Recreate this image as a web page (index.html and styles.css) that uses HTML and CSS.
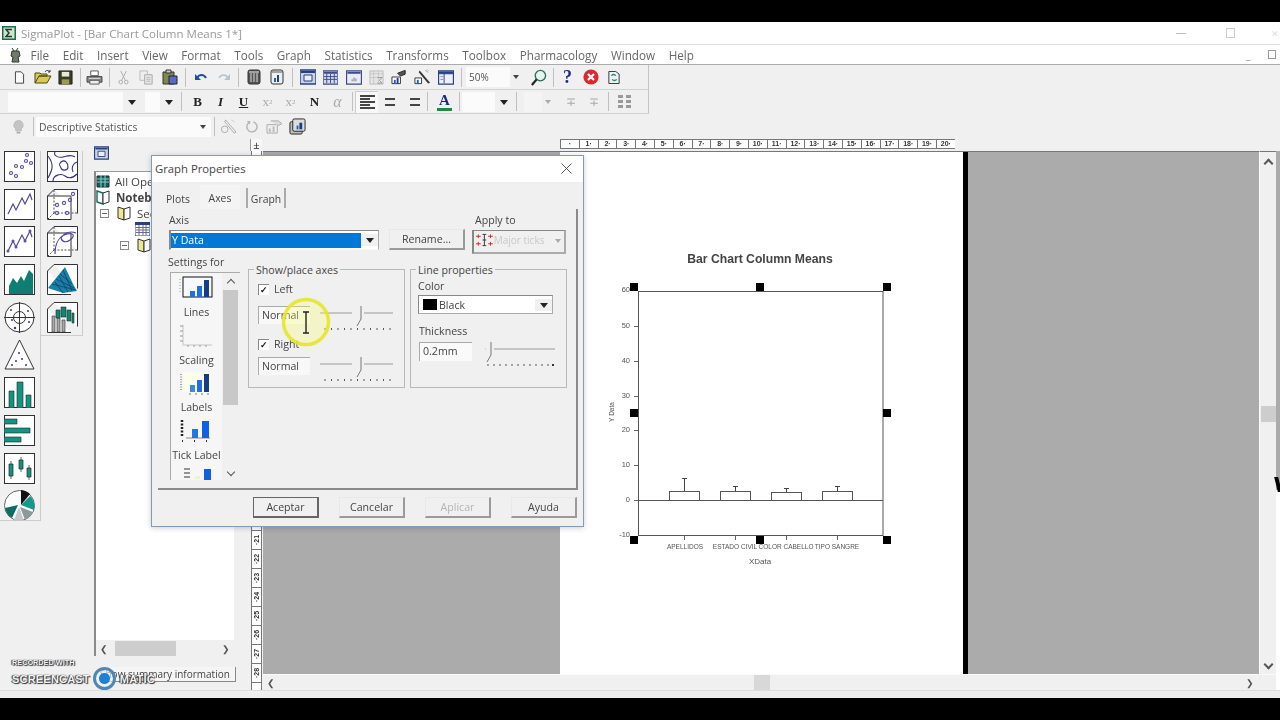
FILE: index.html
```html
<!DOCTYPE html>
<html lang="en">

<head>
    <meta charset="UTF-8">
    <meta name="viewport" content="width=device-width, initial-scale=1.0">
    <title>SigmaPlot - Graph Properties</title>
    <link rel="stylesheet" href="styles.css">
</head>

<body>
    <svg class="defs" width="0" height="0">
        <symbol id="i-new" viewBox="0 0 16 16"><path d="M3 1h7l3 3v11H3z" fill="#fff" stroke="#222"/></symbol>
        <symbol id="i-open" viewBox="0 0 18 16"><path d="M1 14V4h5l1 1h6v2H5L1 14h12l4-7H5" fill="#d9c95a" stroke="#4c4a10"/><path d="M11 3c1-2 3-2 5 0M16 1v2h-2" fill="none" stroke="#333"/></symbol>
        <symbol id="i-save" viewBox="0 0 16 16"><path d="M1 1h14v14H1z" fill="#3c3c22" stroke="#222"/><path d="M4 2h8v5H4z" fill="#e8e8d8"/><path d="M4 10h8v5H4z" fill="#9a9a50"/></symbol>
        <symbol id="i-print" viewBox="0 0 18 16"><path d="M5 1h8v5H5z" fill="#fff" stroke="#555"/><path d="M1 7h16v6H1z" fill="#888" stroke="#444"/><path d="M4 11h10v4H4z" fill="#eee" stroke="#555"/><path d="M3 9h12" stroke="#ddd"/></symbol>
        <symbol id="i-cut" viewBox="0 0 12 16"><path d="M3 1l5 10M9 1L4 11" stroke="#aaa" fill="none"/><circle cx="3" cy="13" r="2" fill="none" stroke="#aaa"/><circle cx="9" cy="13" r="2" fill="none" stroke="#aaa"/></symbol>
        <symbol id="i-copy" viewBox="0 0 16 16"><path d="M1 1h8v10H1z" fill="#eee" stroke="#bbb"/><path d="M6 5h8v10H6z" fill="#e4e4e4" stroke="#aaa"/><path d="M8 8h4M8 10h4M8 12h4" stroke="#bbb"/></symbol>
        <symbol id="i-paste" viewBox="0 0 16 16"><path d="M1 3h11v12H1z" fill="#7d8a4a" stroke="#333"/><path d="M4 1h5v3H4z" fill="#ccc" stroke="#333"/><path d="M7 7h8v8H7z" fill="#5b6bc0" stroke="#223"/></symbol>
        <symbol id="i-undo" viewBox="0 0 14 12"><path d="M3 7c2-4 7-4 9 0" fill="none" stroke="#1f4fa0" stroke-width="2"/><path d="M1 3v6h6z" fill="#1f4fa0"/></symbol>
        <symbol id="i-redo" viewBox="0 0 14 12"><path d="M2 7c2-4 7-4 9 0" fill="none" stroke="#b9c3d0" stroke-width="1.6"/><path d="M13 3v6H7z" fill="#b9c3d0"/></symbol>
        <symbol id="i-book" viewBox="0 0 16 16"><rect x="2" y="1" width="12" height="14" rx="2" fill="#555" stroke="#333"/><path d="M5 4v9M8 4v9M11 4v9" stroke="#ddd"/><path d="M3 3h10" stroke="#eee"/></symbol>
        <symbol id="i-bookchart" viewBox="0 0 16 16"><rect x="2" y="1" width="12" height="14" rx="2" fill="#eee" stroke="#333"/><path d="M5 9h2v4H5z" fill="#1f5fc0"/><path d="M8 6h2v7H8z" fill="#1f3f90"/><path d="M3 3h10" stroke="#555"/></symbol>
        <symbol id="i-win" viewBox="0 0 16 16"><path d="M0 1h16v14H0z" fill="#c7d2ea" stroke="#27417f" stroke-width="1.4"/><path d="M1 2h14v2H1z" fill="#27417f"/><path d="M4 6h8v6H4z" fill="#eef" stroke="#27417f"/></symbol>
        <symbol id="i-grid" viewBox="0 0 16 16"><path d="M0 1h16v14H0z" fill="#d4d8ee" stroke="#3b4a8a" stroke-width="1.4"/><path d="M1 2h14v2H1z" fill="#3b4a8a"/><path d="M4 4v10M8 4v10M12 4v10M1 7h14M1 10h14" stroke="#3b4a8a"/></symbol>
        <symbol id="i-chartwin" viewBox="0 0 16 16"><path d="M0 1h16v14H0z" fill="#e8ecf5" stroke="#3b4a8a" stroke-width="1.4"/><path d="M1 2h14v2H1z" fill="#3b4a8a"/><path d="M6 10v2M8 8v4M10 9v3" stroke="#777"/></symbol>
        <symbol id="i-stat" viewBox="0 0 16 16"><path d="M1 1h14v14H1z" fill="#e6e6e6" stroke="#bbb"/><path d="M1 4h14M5 1v14M10 1v14M1 8h14" stroke="#c6c6c6"/><path d="M9 8h5l-3 3 3 3H9" fill="none" stroke="#999"/></symbol>
        <symbol id="i-wiz" viewBox="0 0 18 16"><path d="M7 4l8-3v4l-5 2z" fill="#555" stroke="#222"/><path d="M1 8h9v7H1z" fill="#fff" stroke="#333"/><path d="M3 11h2v4H3z" fill="#1f5fc0"/><path d="M6 9h2v6H6z" fill="#1f3f90"/></symbol>
        <symbol id="i-tool" viewBox="0 0 18 16"><path d="M6 1l11 13-2 1L5 3z" fill="#333"/><path d="M12 1l3 2M14 0l1 1" stroke="#999"/><path d="M1 9h7v6H1z" fill="#fff" stroke="#333"/><path d="M3 11h2v4H3z" fill="#1f5fc0"/></symbol>
        <symbol id="i-split" viewBox="0 0 16 16"><path d="M0 1h16v14H0z" fill="#eef" stroke="#27417f" stroke-width="1.4"/><path d="M1 2h14v2H1zM6 4v10" fill="#27417f" stroke="#27417f"/><path d="M2 7h3M2 10h3" stroke="#888"/></symbol>
        <symbol id="i-search" viewBox="0 0 18 18"><circle cx="11" cy="7" r="5.5" fill="#e6f4ee" stroke="#2c6b60" stroke-width="1.4"/><path d="M7 11l-5 6" stroke="#222" stroke-width="2.4"/></symbol>
        <symbol id="i-stop" viewBox="0 0 16 16"><circle cx="8" cy="8" r="7.6" fill="#dc2730"/><path d="M5 5l6 6M11 5l-6 6" stroke="#fff" stroke-width="2.2"/></symbol>
        <symbol id="i-recalc" viewBox="0 0 14 16"><path d="M1 1h8l4 3v11H1z" fill="#eef" stroke="#222"/><path d="M4 6c1-2 4-2 5 0M10 10c-1 2-4 2-5 0" fill="none" stroke="#1a9a3a" stroke-width="1.6"/></symbol>
        <symbol id="i-bulb" viewBox="0 0 14 16"><path d="M7 1a5 5 0 0 1 3 9v2H4v-2A5 5 0 0 1 7 1z" fill="#c4c4c4" stroke="#bbb"/><path d="M5 13h4v2H5z" fill="#aaa"/></symbol>
        <symbol id="i-rotate" viewBox="0 0 14 14"><path d="M9 2a5.5 5.5 0 1 1-5 1" fill="none" stroke="#b5b5b5" stroke-width="1.6"/><path d="M2 1l4 0-1 4z" fill="#b5b5b5"/></symbol>
        <symbol id="i-toolgrey" viewBox="0 0 18 16"><path d="M6 1l11 13-2 1L5 3z" fill="none" stroke="#aaa"/><path d="M12 1l3 2" stroke="#ccc"/><circle cx="5" cy="11" r="3.5" fill="none" stroke="#aaa"/></symbol>
        <symbol id="i-pagegrey" viewBox="0 0 18 16"><path d="M1 6h11v9H1z" fill="#eee" stroke="#aaa"/><path d="M5 2h8l4 3-4 2" fill="#ddd" stroke="#aaa"/><path d="M3 10h2v4H3zM7 8h2v6H7z" fill="#bbb"/></symbol>
        <symbol id="i-bookdark" viewBox="0 0 18 18"><rect x="1" y="4" width="13" height="13" rx="1.5" fill="#bbb" stroke="#222"/><rect x="4" y="1" width="13" height="13" rx="1.5" fill="#ddd" stroke="#222"/><path d="M8 8h2v4H8z" fill="#1f5fc0"/><path d="M11 5h3v7h-3z" fill="#14407f"/></symbol>
        <symbol id="i-tree-grid" viewBox="0 0 15 14"><path d="M0 0h15v14H0z" fill="#fff" stroke="#27417f"/><path d="M0 0h15v3H0z" fill="#27417f"/><path d="M1 5.500h13M1 8h13M1 10.500h13M4 3v10M8 3v10M11 3v10" stroke="#6b6b8a"/></symbol>
        <symbol id="i-tree-book" viewBox="0 0 15 16"><path d="M1 2l6 2v11l-6-2z" fill="#eee890" stroke="#333"/><path d="M13 2L7 4v11l6-2z" fill="#fff" stroke="#333"/></symbol>
        <symbol id="i-tree-all" viewBox="0 0 14 14"><path d="M1 2h12v11H1z" fill="#10605a" stroke="#222"/><path d="M5 1v12M9 1v12M1 5h12M1 8h12" stroke="#8cc"/></symbol>
        <symbol id="i-tree-nb" viewBox="0 0 15 16"><path d="M1 2l6 2v11l-6-2z" fill="#fff" stroke="#0d6a60" stroke-width="1.4"/><path d="M13 2L7 4v11l6-2z" fill="#fff" stroke="#333"/></symbol>
        <symbol id="slider" viewBox="0 0 73 30"><path d="M0 7h32M44 7h29" stroke="#9a9a9a"/><path d="M41 0v13l-4 7" fill="none" stroke="#777"/><path d="M5 22v2M11.500 22v2M18 22v2M24.500 22v2M31 22v2M37.500 22v2M44 22v2M50.500 22v2M57 22v2M63.500 22v2M70 22v2" stroke="#555"/></symbol>
        <symbol id="slider-low" viewBox="0 0 71 30"><path d="M10 7h61" stroke="#9a9a9a"/><path d="M7 0v13l-4 7" fill="none" stroke="#777"/><path d="M1 7h1" stroke="#bbb"/><path d="M4 22v2M10 22v2M16 22v2M22 22v2M28 22v2M34 22v2M40 22v2M46 22v2M52 22v2M58 22v2M64 22v2" stroke="#555"/><path d="M68 22h2v2h-2z" fill="#333"/></symbol>
    </svg>

    <div class="app">
        <div class="titlebar">
            <svg class="app-icon" viewBox="0 0 14 14"><rect width="14" height="14" fill="#1e6b4c"/><rect x="1.500" y="1.500" width="11" height="11" fill="#cfe4c8"/><path d="M10 3.500H4l3 3.500-3 3.500h6" fill="none" stroke="#173d2e" stroke-width="1.400"/></svg>
            <span class="app-title">SigmaPlot - [Bar Chart Column Means 1*]</span>
            <span class="win-btn win-min"></span>
            <span class="win-btn win-max"></span>
            <span class="win-close">&#10005;</span>
        </div>

        <div class="menubar">
            <svg class="menu-icon" viewBox="0 0 14 16"><path d="M3 1l2 3M9 1L7 4M3 4h7l1 5-2 1 1 5H3l1-5-2-1z" fill="#6f7c6c" stroke="#2d3a2a"/></svg>
            <span>File</span>
            <span>Edit</span>
            <span>Insert</span>
            <span>View</span>
            <span>Format</span>
            <span>Tools</span>
            <span>Graph</span>
            <span>Statistics</span>
            <span>Transforms</span>
            <span>Toolbox</span>
            <span>Pharmacology</span>
            <span>Window</span>
            <span>Help</span>
            <span class="menu-right">_</span>
            <span class="menu-restore"></span>
        </div>

        <div class="toolbar tb-one">
            <span class="btn"><svg width="13" height="15"><use href="#i-new"/></svg></span>
            <span class="btn"><svg width="18" height="16"><use href="#i-open"/></svg></span>
            <span class="btn"><svg width="15" height="15"><use href="#i-save"/></svg></span>
            <span class="sep sep-n"></span>
            <span class="btn"><svg width="17" height="15"><use href="#i-print"/></svg></span>
            <span class="sep sep-n"></span>
            <span class="btn"><svg width="11" height="15"><use href="#i-cut"/></svg></span>
            <span class="btn"><svg width="15" height="15"><use href="#i-copy"/></svg></span>
            <span class="btn"><svg width="16" height="16"><use href="#i-paste"/></svg></span>
            <span class="sep sep-w"></span>
            <span class="btn"><svg width="14" height="12"><use href="#i-undo"/></svg></span>
            <span class="btn"><svg width="14" height="12"><use href="#i-redo"/></svg></span>
            <span class="sep"></span>
            <span class="btn"><svg width="16" height="16"><use href="#i-book"/></svg></span>
            <span class="btn"><svg width="16" height="16"><use href="#i-bookchart"/></svg></span>
            <span class="sep sep-w"></span>
            <span class="btn"><svg width="16" height="16"><use href="#i-win"/></svg></span>
            <span class="btn"><svg width="15" height="15"><use href="#i-grid"/></svg></span>
            <span class="btn"><svg width="16" height="15"><use href="#i-chartwin"/></svg></span>
            <span class="btn"><svg width="15" height="15"><use href="#i-stat"/></svg></span>
            <span class="btn"><svg width="17" height="16"><use href="#i-wiz"/></svg></span>
            <span class="btn"><svg width="17" height="16"><use href="#i-tool"/></svg></span>
            <span class="btn"><svg width="16" height="15"><use href="#i-split"/></svg></span>
            <span class="sep sep-x"></span>
            <span class="combo-white zoom-combo">50%</span>
            <span class="drop drop-small"></span>
            <span class="btn btn-gap"><svg width="17" height="17"><use href="#i-search"/></svg></span>
            <span class="sep sep-n"></span>
            <span class="btn help-q">?</span>
            <span class="btn"><svg width="16" height="16"><use href="#i-stop"/></svg></span>
            <span class="btn"><svg width="12" height="15"><use href="#i-recalc"/></svg></span>
        </div>

        <div class="toolbar tb-two">
            <span class="combo-white font-combo"></span>
            <span class="drop drop-grey"></span>
            <span class="combo-white size-combo"></span>
            <span class="drop"></span>
            <span class="sep sep-x"></span>
            <span class="btn fmt fmt-b">B</span>
            <span class="btn fmt fmt-i">I</span>
            <span class="btn fmt fmt-u">U</span>
            <span class="btn fmt fmt-off fmt-sup">x<sup>2</sup></span>
            <span class="btn fmt fmt-off">x<sub>2</sub></span>
            <span class="btn fmt fmt-b fmt-n">N</span>
            <span class="btn fmt fmt-alpha">&#945;</span>
            <span class="sep sep-n"></span>
            <span class="btn btn-pressed"><span class="align align-left"><i></i><i></i><i></i><i></i><i></i></span></span>
            <span class="btn"><span class="align align-center"><i></i><i></i><i></i><i></i><i></i></span></span>
            <span class="btn"><span class="align align-right"><i></i><i></i><i></i><i></i><i></i></span></span>
            <span class="sep sep-n"></span>
            <span class="btn fmt-color">A</span>
            <span class="sep sep-n"></span>
            <span class="combo-white color-combo"></span>
            <span class="drop drop-grey"></span>
            <span class="sep sep-x"></span>
            <span class="combo-off"></span>
            <span class="drop drop-small drop-off"></span>
            <span class="btn fmt-off fmt-dist fmt-dist1">&#8723;</span>
            <span class="btn fmt-off fmt-dist">&#8723;</span>
            <span class="sep sep-n"></span>
            <span class="btn dots"><i></i><i></i><i></i><i></i><i></i><i></i></span>
        </div>

        <div class="toolbar tb-three">
            <span class="btn bulb"><svg width="13" height="16"><use href="#i-bulb"/></svg></span>
            <span class="sep sep-n"></span>
            <span class="combo-white stats-combo">Descriptive Statistics<span class="drop drop-small"></span></span>
            <span class="sep sep-n"></span>
            <span class="btn"><svg width="17" height="15"><use href="#i-toolgrey"/></svg></span>
            <span class="btn"><svg width="13" height="13"><use href="#i-rotate"/></svg></span>
            <span class="btn"><svg width="17" height="15"><use href="#i-pagegrey"/></svg></span>
            <span class="btn"><svg width="17" height="17"><use href="#i-bookdark"/></svg></span>
        </div>

        <div class="ruler-row">
            <span class="ruler-corner">&#177;</span>
            <div class="hruler">
                <span>&#183;</span><span>1&#183;</span><span>2&#183;</span><span>3&#183;</span><span>4&#183;</span><span>5&#183;</span><span>6&#183;</span><span>7&#183;</span><span>8&#183;</span><span>9&#183;</span><span>10&#183;</span><span>11&#183;</span><span>12&#183;</span><span>13&#183;</span><span>14&#183;</span><span>15&#183;</span><span>16&#183;</span><span>17&#183;</span><span>18&#183;</span><span>19&#183;</span><span>20&#183;</span>
            </div>
        </div>

        <div class="main">
            <div class="palette">
                <div class="pal-col pal-col-one">
                    <svg class="pal" viewBox="0 0 31 31"><rect x=".5" y=".5" width="30" height="30" fill="#fff" stroke="#333"/><g fill="none" stroke="#5b50a8" stroke-width="1.200"><circle cx="7" cy="22" r="1.500"/><circle cx="12" cy="25" r="1.500"/><circle cx="12" cy="15" r="1.500"/><circle cx="18" cy="16" r="1.500"/><circle cx="22" cy="10" r="1.500"/><circle cx="27" cy="12" r="1.500"/><circle cx="23" cy="4" r="1.500"/></g></svg>
                    <svg class="pal" viewBox="0 0 31 31"><rect x=".5" y=".5" width="30" height="30" fill="#fff" stroke="#333"/><path d="M4 25l5-10 3 6 6-12 3 6 5-10 2 6" fill="none" stroke="#4f44a0" stroke-width="1.200"/></svg>
                    <svg class="pal" viewBox="0 0 31 31"><rect x=".5" y=".5" width="30" height="30" fill="#fff" stroke="#333"/><path d="M4 25l5-10 3 6 6-12 3 6 5-10 2 6" fill="none" stroke="#4f44a0" stroke-width="1.200"/><g fill="#5b50a8"><circle cx="4" cy="25" r="1.500"/><circle cx="9" cy="15" r="1.500"/><circle cx="12" cy="21" r="1.500"/><circle cx="21" cy="15" r="1.500"/><circle cx="26" cy="5" r="1.500"/></g></svg>
                    <svg class="pal" viewBox="0 0 31 31"><rect x=".5" y=".5" width="30" height="30" fill="#fff" stroke="#333"/><path d="M5 30V22l4-8 4 5 4-7 3 5 5-11 4 4v20z" fill="#0f7d72"/></svg>
                    <svg class="pal" viewBox="0 0 31 31"><circle cx="15.500" cy="15.500" r="14.500" fill="#fff" stroke="#333"/><circle cx="15.500" cy="15.500" r="6" fill="none" stroke="#333"/><path d="M15.500 0v31M0 15.500h31" stroke="#333"/><g fill="#3b3590"><circle cx="7" cy="8" r="1"/><circle cx="24" cy="9" r="1"/><circle cx="8" cy="18" r="1"/><circle cx="25" cy="20" r="1"/><circle cx="11" cy="26" r="1.200"/></g></svg>
                    <svg class="pal pal-tri" viewBox="0 0 31 31"><path d="M15.500 1L30 30H1z" fill="#fff" stroke="#333"/><g fill="#3b3590"><circle cx="15" cy="14" r="1"/><circle cx="18" cy="20" r="1"/><circle cx="12" cy="22" r="1"/><circle cx="22" cy="26" r="1"/><circle cx="8" cy="26" r="1"/></g></svg>
                    <svg class="pal" viewBox="0 0 31 31"><rect x=".5" y=".5" width="30" height="30" fill="#fff" stroke="#333"/><path d="M5 14h5v17H5zM13 5h6v26h-6zM22 18h5v13h-5z" fill="#129482" stroke="#222" stroke-width=".6"/></svg>
                    <svg class="pal" viewBox="0 0 31 31"><rect x=".5" y=".5" width="30" height="30" fill="#fff" stroke="#333"/><path d="M0 4h13v5H0zM0 13h26v5H0zM0 22h17v5H0z" fill="#129482" stroke="#222" stroke-width=".6"/></svg>
                    <svg class="pal" viewBox="0 0 31 31"><rect x=".5" y=".5" width="30" height="30" fill="#fff" stroke="#333"/><g fill="#129482" stroke="#222" stroke-width=".7"><path d="M5 11h4v12H5zM15 7h4v9h-4zM23 15h4v9h-4z"/><path d="M7 8v3M7 23v3M17 4v3M17 16v3M25 12v3M25 24v3" fill="none"/></g></svg>
                    <svg class="pal" viewBox="0 0 31 31"><circle cx="15.500" cy="15.500" r="15" fill="#fff" stroke="#666"/><path d="M17 15V0a15 15 0 0 1 9 4z" fill="#111"/><path d="M17 15l9-9a15 15 0 0 1 4 14z" fill="#139a8a"/><path d="M16 17l13 5a15 15 0 0 1-8 8z" fill="#8a9a9a"/><path d="M15 17l5 14a15 15 0 0 1-10-1z" fill="#c8c8c8"/><path d="M14 15L1 18a15 15 0 0 0 7 10z" fill="#0d6d64"/></svg>
                </div>
                <div class="pal-col pal-col-two">
                    <svg class="pal" viewBox="0 0 31 31"><rect x=".5" y=".5" width="30" height="30" fill="#fff" stroke="#333"/><path d="M1 5c6 8 5 13 0 22M8 1c-2 4 4 6 8 5s8-3 12 0M14 11c4-3 7 1 7 5s-6 4-7 1-3-3 0-6zM6 30c0-6 8-8 12-5s8 2 12-2M30 11c-4 1-6 6-4 10" fill="none" stroke="#30308a" stroke-width="1.100"/></svg>
                    <svg class="pal" viewBox="0 0 31 31"><path d="M7 .5h23.500v24M.5 7v23.500H24M7 .5L.5 7M.5 7h23.500v23.500" fill="#fff" stroke="#333"/><path d="M7 1v23M7 24h23M7 24l-6 6" stroke="#555" stroke-dasharray="2 1.500"/><g fill="none" stroke="#5b50a8" stroke-width="1.100"><circle cx="10" cy="16" r="1.600"/><circle cx="17" cy="14" r="1.600"/><circle cx="23" cy="11" r="1.600"/><circle cx="26" cy="5" r="1.600"/><circle cx="10" cy="24" r="1.600"/><circle cx="20" cy="24" r="1.600"/></g></svg>
                    <svg class="pal" viewBox="0 0 31 31"><path d="M7 .5h23.500v24M.5 7v23.500H24M7 .5L.5 7M.5 7h23.500v23.500" fill="#fff" stroke="#333"/><path d="M7 1v23M7 24h23M7 24l-6 6" stroke="#555" stroke-dasharray="2 1.500"/><path d="M8 28c0-10 4-18 12-20 6-1 9 1 3 6-4 3-8 2-9-2M14 12c4-6 10-7 15-5" fill="none" stroke="#4f44a0" stroke-width="1.200"/></svg>
                    <svg class="pal" viewBox="0 0 31 31"><path d="M7 .5h23.500v24M.5 7v23.500H24M7 .5L.5 7" fill="#fff" stroke="#333"/><path d="M1 24L18 3l9 19 3 5-14 2z" fill="#1780a8"/><path d="M5 20l24 6M9 15l18 9M13 10l12 10M8 18l8 11M12 12l9 16M16 6l9 21" stroke="#0b3b58" stroke-width=".7"/></svg>
                    <svg class="pal" viewBox="0 0 31 31"><path d="M7 .5h23.500v24M.5 7v23.500H24M7 .5L.5 7" fill="#fff" stroke="#333"/><path d="M5 14h3v16H5zM10 16h3v14h-3zM15 18h3v12h-3z" fill="#a8a8a8" stroke="#333" stroke-width=".6"/><path d="M9 8h4v8H9zM14 5h5v10h-5zM20 8h4v11h-4zM25 11h2v10h-2z" fill="#15856f" stroke="#1c2c2a" stroke-width=".6"/></svg>
                </div>
            </div>

            <div class="side">
                <div class="side-top">
                    <svg class="side-icon" width="15" height="14"><use href="#i-win"/></svg>
                </div>
                <div class="tree">
                    <div class="tree-rows">
                        <div class="tree-row"><svg width="14" height="14"><use href="#i-tree-all"/></svg><span>All Ope</span></div>
                        <div class="tree-row"><svg width="15" height="16"><use href="#i-tree-nb"/></svg><b>Noteb</b></div>
                        <div class="tree-row tree-sec"><i class="tree-box"></i><svg width="15" height="16"><use href="#i-tree-book"/></svg><span>Sec</span></div>
                        <div class="tree-row tree-doc"><svg width="15" height="14"><use href="#i-tree-grid"/></svg></div>
                        <div class="tree-row tree-sec2"><i class="tree-box"></i><svg width="15" height="16"><use href="#i-tree-book"/></svg></div>
                    </div>
                    <div class="tree-scroll">
                        <span class="arrow-text">&#10094;</span>
                        <span class="tree-thumb"></span>
                        <span class="arrow-text">&#10095;</span>
                    </div>
                </div>
                <div class="summary-btn">Show summary information</div>
            </div>

            <div class="vruler">
                <span>&#183;1</span><span>&#183;2</span><span>&#183;3</span><span>&#183;4</span><span>&#183;5</span><span>&#183;6</span><span>&#183;7</span><span>&#183;8</span><span>&#183;9</span><span>&#183;10</span><span>&#183;11</span><span>&#183;12</span><span>&#183;13</span><span>&#183;14</span><span>&#183;15</span><span>&#183;16</span><span>&#183;17</span><span>&#183;18</span><span>&#183;19</span><span>&#183;20</span><span>&#183;21</span><span>&#183;22</span><span>&#183;23</span><span>&#183;24</span><span>&#183;25</span><span>&#183;26</span><span>&#183;27</span><span>&#183;28</span><span></span>
            </div>

            <div class="doc">
                <div class="doc-main">
                    <div class="doc-row">
                        <div class="canvas">
                            <div class="page">
                                <svg class="chart" viewBox="560 152 403 522">
                                    <text x="760" y="263" class="c-title" text-anchor="middle">Bar Chart Column Means</text>
                                    <rect x="638.500" y="291.500" width="244.500" height="244" fill="none" stroke="#555"/>
                                    <path d="M638 500.500h245" stroke="#555"/>
                                    <path d="M634 326.500h4M634 361.500h4M634 396.500h4M634 430.500h4M634 465.500h4M634 500.500h4" stroke="#666"/>
                                    <g class="c-tick" text-anchor="end">
                                        <text x="630" y="292">60</text>
                                        <text x="630" y="328">50</text>
                                        <text x="630" y="363">40</text>
                                        <text x="630" y="398">30</text>
                                        <text x="630" y="432">20</text>
                                        <text x="630" y="467">10</text>
                                        <text x="630" y="502">0</text>
                                        <text x="630" y="537">-10</text>
                                    </g>
                                    <g fill="#fff" stroke="#555">
                                        <rect x="669.500" y="491.500" width="30" height="9"/>
                                        <rect x="720.500" y="491.500" width="30" height="9"/>
                                        <rect x="771.500" y="492.500" width="30" height="8"/>
                                        <rect x="822.500" y="491.500" width="30" height="9"/>
                                    </g>
                                    <path d="M684.500 491v-13M682 478.500h5M735.500 491v-4.500M733 486.500h5M786.500 492v-3.500M784 488.500h5M837.500 491v-4.500M835 486.500h5" stroke="#444" fill="none"/>
                                    <path d="M684.500 535v5M735.500 535v5M786.500 535v5M837.500 535v5" stroke="#666"/>
                                    <g class="c-label" text-anchor="middle">
                                        <text x="685" y="549">APELLIDOS</text>
                                        <text x="735" y="549">ESTADO CIVIL</text>
                                        <text x="786" y="549">COLOR CABELLO</text>
                                        <text x="837" y="549">TIPO SANGRE</text>
                                    </g>
                                    <text x="760" y="564" class="c-axis" text-anchor="middle">XData</text>
                                    <text class="c-axis c-axis-y" transform="translate(614 412) rotate(-90)" text-anchor="middle">Y Data</text>
                                    <g fill="#000">
                                        <rect x="630" y="283" width="8" height="8"/><rect x="756" y="283" width="8" height="8"/><rect x="883" y="283" width="8" height="8"/>
                                        <rect x="630" y="409" width="8" height="8"/><rect x="883" y="409" width="8" height="8"/>
                                        <rect x="630" y="536" width="8" height="8"/><rect x="756" y="536" width="8" height="8"/><rect x="883" y="536" width="8" height="8"/>
                                    </g>
                                </svg>
                            </div>
                            <div class="page-shadow"></div>
                        </div>
                        <div class="vscroll">
                            <span class="arrow-up"></span>
                            <span class="vthumb"></span>
                            <span class="arrow-down"></span>
                        </div>
                    </div>
                    <div class="hscroll">
                        <span class="arrow-text">&#10094;</span>
                        <span class="hthumb"></span>
                        <span class="arrow-text">&#10095;</span>
                    </div>
                </div>
                <div class="edge"></div>
            </div>
        </div>
        <div class="statusbar"></div>
    </div>

    <!-- dialog -->
    <div class="dialog">
        <div class="dlg-title">
            <span>Graph Properties</span>
            <svg class="dlg-close" width="11" height="11" viewBox="0 0 11 11"><path d="M.5.5l10 10M10.500.5l-10 10" stroke="#555"/></svg>
        </div>
        <div class="tabs">
            <span class="tab">Plots</span>
            <span class="tab tab-active">Axes</span>
            <span class="tab tab-frame">Graph</span>
        </div>
        <div class="panel">
            <div class="panel-top">
                <div class="axis-col">
                    <div class="lbl">Axis</div>
                    <div class="axis-combo"><span class="axis-sel">Y Data</span><span class="drop drop-grey"></span></div>
                </div>
                <div class="push-btn rename">Rename...</div>
                <div class="apply-col">
                    <div class="lbl">Apply to</div>
                    <div class="apply-combo">
                        <svg width="20" height="14" viewBox="0 0 20 14"><path d="M1 3h5M3.500 1v4M1 11h5M3.500 9v4M14 3h5M16.500 1v4M14 11h5M16.500 9v4" stroke="#d8222a"/><path d="M10 1v12M8 1h4M8 13h4M8 7h4" stroke="#333"/></svg>
                        <span>Major ticks</span>
                        <span class="drop drop-small drop-off"></span>
                    </div>
                </div>
            </div>
            <div class="panel-body">
                <div class="settings-col">
                    <div class="lbl">Settings for</div>
                    <div class="list">
                        <div class="list-items">
                            <div class="list-item">
                                <svg width="34" height="24" viewBox="0 0 34 24"><rect x="4" y="1" width="29" height="20" fill="#f8f8ff" stroke="#111"/><path d="M11 15h5v6h-5zM18 10h5v11h-5z" fill="#1f6fe0"/><path d="M25 4h5v17h-5z" fill="#143c8a"/><path d="M1 3v15" stroke="#999" stroke-dasharray="1 2"/></svg>
                                <span>Lines</span>
                            </div>
                            <div class="list-item">
                                <svg width="34" height="24" viewBox="0 0 34 24"><path d="M4 1v20h29" fill="none" stroke="#ddd" stroke-width="2"/><path d="M1 2h3M1 7h3M1 12h3M1 17h3M8 22h2M14 22h2M20 22h2M26 22h2" stroke="#999"/></svg>
                                <span>Scaling</span>
                            </div>
                            <div class="list-item">
                                <svg width="34" height="24" viewBox="0 0 34 24"><path d="M4 1h28v20H4z" fill="#fdfdee"/><path d="M11 14h5v7h-5z" fill="#3a88e0"/><path d="M18 9h5v12h-5z" fill="#1f6fe0"/><path d="M25 3h5v18h-5z" fill="#143c8a"/><path d="M2 3v16" stroke="#555" stroke-dasharray="1 1.500"/><path d="M10 23h20" stroke="#777" stroke-dasharray="2 4"/></svg>
                                <span>Labels</span>
                            </div>
                            <div class="list-item">
                                <svg width="34" height="24" viewBox="0 0 34 24"><path d="M3 1v17" stroke="#222" stroke-width="2.500" stroke-dasharray="2 1.500"/><path d="M7 19h24" stroke="#888"/><path d="M13 10h6v9h-6z" fill="#1f78e0"/><path d="M23 2h7v17h-7z" fill="#1060e0"/><path d="M3 22h1M15 22h1M27 22h1" stroke="#333" stroke-width="2"/></svg>
                                <span>Tick Label</span>
                            </div>
                            <div class="list-item">
                                <svg width="34" height="24" viewBox="0 0 34 24"><path d="M5 2h6M5 6h6M5 10h6" stroke="#333"/><path d="M16 9h5v3h-5z" fill="#f3f2c6"/><path d="M25 2h7v12h-7z" fill="#1060e0"/></svg>
                            </div>
                        </div>
                        <div class="list-scroll">
                            <span class="arrow-up arrow-light"></span>
                            <span class="list-thumb"></span>
                            <span class="arrow-down arrow-light"></span>
                        </div>
                    </div>
                </div>

                <div class="group group-axes">
                    <span class="legend">Show/place axes</span>
                    <div class="check-row"><span class="check">&#10003;</span><span>Left</span></div>
                    <div class="field-row">
                        <span class="field">Normal</span>
                        <svg class="slider" width="73" height="30"><use href="#slider"/></svg>
                    </div>
                    <div class="check-row check-row2"><span class="check">&#10003;</span><span>Right</span></div>
                    <div class="field-row field-row2">
                        <span class="field">Normal</span>
                        <svg class="slider" width="73" height="30"><use href="#slider"/></svg>
                    </div>
                </div>

                <div class="group group-line">
                    <span class="legend">Line properties</span>
                    <div class="lbl color-lbl">Color</div>
                    <div class="color-select"><i class="swatch"></i><span>Black</span><span class="drop drop-grey"></span></div>
                    <div class="lbl thick-lbl">Thickness</div>
                    <div class="field-row thick-row">
                        <span class="field field-thick">0.2mm</span>
                        <svg class="slider slider-thick" width="71" height="30"><use href="#slider-low"/></svg>
                    </div>
                </div>
            </div>
        </div>
        <div class="dlg-footer">
            <div class="push-btn btn-default">Aceptar</div>
            <div class="push-btn">Cancelar</div>
            <div class="push-btn btn-disabled">Aplicar</div>
            <div class="push-btn">Ayuda</div>
        </div>
    </div>

    <!-- screencast highlight and watermark -->
    <svg class="highlight" width="56" height="56" viewBox="0 0 56 56">
        <circle cx="28" cy="28" r="22.500" fill="#ffff70" fill-opacity=".3" stroke="#e6e62a" stroke-width="3.500" stroke-opacity=".9"/>
        <path d="M25 18h6M25 39h6M28 18v21" stroke="#222" stroke-width="1.400"/>
    </svg>
    <div class="watermark">
        <div class="wm-small">RECORDED WITH</div>
        <div class="wm-big"><span>SCREENCAST</span><i class="wm-dot"></i><span>MATIC</span></div>
    </div>
</body>
</html>
```

FILE: styles.css
```css
* {
    box-sizing: border-box;
}

body {
    margin: 0;
    padding: 0;
    width: 1280px;
    height: 720px;
    overflow: hidden;
    background-color: black;
    font-family: 'Open Sans', 'Liberation Sans', sans-serif;
    position: relative;
}

.defs {
    position: absolute;
}

.app {
    margin-top: 22px;
    height: 676px;
    display: flex;
    flex-direction: column;
    background-color: #f0f0f0;
    color: #444;
    filter: blur(0.3px);
}

/* title + menu */
.titlebar {
    height: 23px;
    background-color: white;
    border-bottom: 1px solid #ddd;
    display: flex;
    align-items: center;
    padding-left: 2px;
    flex: none;
}

.app-icon {
    width: 14px;
    height: 14px;
}

.app-title {
    margin-left: 5px;
    font-size: 11.5px;
    color: #999;
}

.win-btn {
    display: block;
    flex: none;
}

.win-min {
    margin-left: auto;
    margin-right: 40px;
    width: 10px;
    height: 1px;
    background-color: #bbb;
}

.win-max {
    margin-right: 36px;
    width: 9px;
    height: 10px;
    border: 1px solid #ccc;
}

.win-close {
    font-size: 9px;
    color: #ddd;
    width: 9px;
    flex: none;
    overflow: hidden;
}

.menubar {
    height: 20px;
    flex: none;
    background-color: white;
    border-bottom: 1px solid #aaa;
    display: flex;
    align-items: center;
    gap: 13.6px;
    font-size: 11.7px;
    color: #666;
    padding-left: 9px;
}

.menu-icon {
    width: 14px;
    height: 16px;
    margin-right: -6px;
}

.menu-right {
    margin-left: auto;
    font-size: 10px;
    color: #888;
    margin-right: 4px;
}

.menu-restore {
    width: 8px;
    height: 9px;
    border: 1px solid #999;
    margin-right: 4px;
}

/* toolbars */
.toolbar {
    flex: none;
    display: flex;
    align-items: center;
    width: 649px;
    border-right: 1px solid #c4c4c4;
    border-bottom: 1px solid #d2d2d2;
}

.tb-one {
    height: 25px;
    padding-left: 8px;
}

.tb-two {
    height: 24px;
    padding-left: 8px;
}

.tb-three {
    height: 25px;
    padding-left: 7px;
    border: none;
}

.btn {
    width: 23px;
    height: 22px;
    flex: none;
    display: flex;
    align-items: center;
    justify-content: center;
}

.btn-gap {
    margin-left: 5px;
}

.btn-pressed {
    background-color: #f8f8f8;
    border-top: 1px solid #ccc;
    border-left: 1px solid #ccc;
}

.sep {
    flex: none;
    width: 1px;
    height: 19px;
    background-color: #c0c0c0;
    margin: 0 3px;
}

.sep-n {
    margin: 0 2.5px;
}

.sep-w {
    margin: 0 3.5px;
}

.sep-x {
    margin: 0 4px;
}

.combo-white {
    flex: none;
    height: 20px;
    background-color: #fbfbfb;
    display: flex;
    align-items: center;
    font-size: 10px;
    color: #555;
}

.zoom-combo {
    width: 44px;
    padding-left: 3px;
}

.font-combo {
    width: 115px;
}

.size-combo {
    width: 15px;
    margin-left: 5px;
}

.color-combo {
    width: 33px;
}

.combo-off {
    width: 18px;
    height: 20px;
    flex: none;
    margin-left: 3px;
    background-color: #f4f4f4;
}

.stats-combo {
    width: 175px;
    position: relative;
    padding-left: 3px;
    font-size: 10.3px;
}

.stats-combo .drop {
    position: absolute;
    right: 2px;
    top: 4px;
}

.drop {
    flex: none;
    width: 17px;
    height: 12px;
    display: block;
    position: relative;
}

.drop::after {
    content: "";
    position: absolute;
    left: 50%;
    top: 50%;
    margin-left: -4px;
    margin-top: -2px;
    border-left: 4px solid transparent;
    border-right: 4px solid transparent;
    border-top: 5px solid #222;
}

.drop-small {
    width: 12px;
}

.drop-small::after {
    margin-left: -3px;
    border-left-width: 3px;
    border-right-width: 3px;
    border-top-width: 4px;
    border-top-color: #444;
}

.drop-off::after {
    border-top-color: #aaa;
}

.drop-grey {
    background-color: #f0f0f0;
}

.fmt {
    font-family: 'Liberation Serif', serif;
    font-size: 13px;
    color: #222;
}

.fmt-b {
    font-weight: bold;
}

.fmt-i {
    font-weight: bold;
    font-style: italic;
}

.fmt-u {
    font-weight: bold;
    text-decoration: underline;
}

.fmt-off {
    color: #aaa;
    font-weight: normal;
}

.fmt-sup {
    margin-left: 1px;
}

.fmt-n {
    margin-left: 1px;
}

.fmt-off sup,
.fmt-off sub {
    font-size: 7px;
}

.fmt-alpha {
    color: #aaa;
    font-style: italic;
    font-size: 16px;
}

.fmt-dist {
    font-size: 12px;
}

.fmt-dist1 {
    margin-left: 5px;
}

.fmt-color {
    font-family: 'Liberation Serif', serif;
    font-weight: bold;
    font-size: 15px;
    color: #1d2a80;
    border-bottom: 3px solid #1f8a3c;
    height: 18px;
    width: 15px;
    margin: 0 4px 0 7px;
    line-height: 15px;
}

.help-q {
    font-family: 'Liberation Serif', serif;
    font-weight: bold;
    font-size: 18px;
    color: #1d2a90;
}

.align {
    display: flex;
    flex-direction: column;
    gap: 1px;
    width: 15px;
}

.align i {
    display: block;
    height: 2px;
    background-color: #444;
}

.align-left i:nth-child(even),
.align-center i:nth-child(even),
.align-right i:nth-child(even) {
    width: 10px;
}

.align-center {
    align-items: center;
}

.align-right {
    align-items: flex-end;
}

.dots {
    display: grid;
    grid-template-columns: 5px 5px;
    gap: 2px 3px;
    justify-content: center;
    align-content: center;
    margin-left: 2px;
}

.dots i {
    display: block;
    height: 3px;
    background-color: #999;
}

.ruler-row {
    height: 12px;
    flex: none;
    display: flex;
    align-items: stretch;
    font-size: 7px;
    color: #333;
}

.ruler-corner {
    margin-left: 250px;
    width: 12px;
    font-size: 11px;
    line-height: 11px;
    text-align: center;
    color: #222;
    background-color: #f8f8f8;
    border-left: 1px solid #999;
}

.hruler {
    margin-left: 298px;
    display: flex;
    height: 10px;
    background-color: white;
    font-family: 'Liberation Sans', sans-serif;
    font-weight: bold;
}

.hruler span {
    width: 18.8px;
    border: 1px solid #777;
    border-right: none;
    text-align: center;
    line-height: 8px;
}

/* main area */
.main {
    flex: 1;
    min-height: 0;
    display: flex;
}

.palette {
    width: 83px;
    flex: none;
    display: flex;
    align-items: flex-start;
}

.pal-col {
    display: flex;
    flex-direction: column;
    gap: 6.7px;
}

.pal-col-one {
    width: 41px;
    height: 370px;
    padding-left: 4px;
    border-right: 1px solid #ccc;
    border-bottom: 1px solid #ccc;
}

.pal-col-two {
    width: 42px;
    height: 185px;
    padding-left: 6px;
    border-right: 1px solid #ccc;
    border-bottom: 1px solid #ccc;
}

.pal {
    width: 31px;
    height: 31px;
    flex: none;
}

.side {
    width: 168px;
    flex: none;
    display: flex;
    flex-direction: column;
}

.side-top {
    height: 20px;
    padding-left: 11px;
    display: flex;
    align-items: flex-start;
}

.side-icon {
    margin-top: -5px;
}

.tree {
    margin-left: 11px;
    width: 140px;
    height: 485px;
    background-color: white;
    border-left: 2px solid #8a8a8a;
    border-top: 1px solid #999;
    display: flex;
    flex-direction: column;
}

.tree-rows {
    flex: 1;
    padding-top: 1px;
    overflow: hidden;
    font-size: 11.5px;
    color: #444;
}

.tree-row {
    height: 16px;
    display: flex;
    align-items: center;
    white-space: nowrap;
}

.tree-row svg {
    flex: none;
    margin-right: 5px;
}

.tree-sec {
    padding-left: 4px;
}

.tree-doc {
    padding-left: 39px;
}

.tree-sec2 {
    padding-left: 24px;
}

.tree-box {
    width: 9px;
    height: 9px;
    border: 1px solid #888;
    margin-right: 8px;
    flex: none;
    background: linear-gradient(#666, #666) center / 5px 1px no-repeat;
}

.tree-scroll {
    height: 16px;
    background-color: #f0f0f0;
    display: flex;
    align-items: center;
    padding: 0 4px;
    font-size: 9px;
    color: #555;
}

.tree-thumb {
    margin-left: 7px;
    width: 61px;
    height: 15px;
    background-color: #cdcdcd;
    margin-right: auto;
}

.summary-btn {
    margin-top: 11px;
    margin-left: 17px;
    width: 136px;
    height: 15px;
    font-size: 10px;
    line-height: 14px;
    color: #444;
    text-align: right;
    padding-right: 6px;
    white-space: nowrap;
    border-right: 1px solid #888;
    border-bottom: 1px solid #888;
    background-color: #f5f5f5;
}

.vruler {
    width: 11px;
    flex: none;
    background-color: white;
    overflow: hidden;
    display: flex;
    flex-direction: column;
    font-family: 'Liberation Sans', sans-serif;
    font-weight: bold;
    font-size: 7px;
    color: #333;
}

.vruler span {
    flex: none;
    height: 19px;
    border: 1px solid #777;
    border-bottom: none;
    writing-mode: vertical-rl;
    transform: rotate(180deg);
    text-align: center;
    line-height: 9px;
}

.doc {
    flex: 1;
    min-width: 0;
    display: flex;
    margin-left: 1px;
}

.doc-main {
    flex: 1;
    min-width: 0;
    display: flex;
    flex-direction: column;
}

.doc-row {
    flex: 1;
    min-height: 0;
    display: flex;
}

.canvas {
    flex: 1;
    display: flex;
    padding-left: 297px;
    background-color: #ababab;
    border-top: 1px solid #777;
}

.page {
    width: 403px;
    background-color: white;
}

.chart {
    width: 403px;
    height: 522px;
    display: block;
}

.c-title {
    font: bold 12.2px 'Liberation Sans', sans-serif;
    fill: #444;
}

.c-tick,
.c-label {
    font: 6.5px 'Liberation Sans', sans-serif;
    fill: #555;
}

.c-tick {
    font-size: 7.5px;
}

.c-axis {
    font: 8px 'Liberation Sans', sans-serif;
    fill: #555;
}

.c-axis-y {
    font-size: 6.5px;
}

.page-shadow {
    width: 5px;
    background-color: black;
}

.vscroll {
    width: 17px;
    flex: none;
    background-color: #f0f0f0;
    border-top: 1px solid #777;
    border-left: 1px solid #fafafa;
    display: flex;
    flex-direction: column;
    align-items: center;
    padding: 8px 0 6px;
    position: relative;
}

.vthumb {
    position: absolute;
    top: 254px;
    left: 1px;
    width: 15px;
    height: 16px;
    background-color: #cdcdcd;
}

.arrow-up,
.arrow-down {
    width: 7px;
    height: 7px;
    border-left: 2px solid #555;
    border-top: 2px solid #555;
    transform: rotate(45deg);
    flex: none;
}

.arrow-down {
    margin-top: auto;
    transform: rotate(225deg);
}

.hscroll {
    height: 16px;
    flex: none;
    background-color: #f0f0f0;
    border-top: 1px solid #fafafa;
    display: flex;
    align-items: center;
    justify-content: space-between;
    padding: 0 22px 0 4px;
    font-size: 9px;
    color: #555;
    position: relative;
}

.hthumb {
    position: absolute;
    left: 491px;
    top: 0;
    width: 16px;
    height: 15px;
    background-color: #d8d8d8;
}

.edge {
    width: 4px;
    flex: none;
    background: linear-gradient(#ababab 339px, white 339px);
    position: relative;
}

.edge::after {
    content: "";
    position: absolute;
    left: 0;
    top: 326px;
    width: 4px;
    height: 15px;
    background-color: black;
    transform: skewX(14deg);
}

.statusbar {
    height: 8px;
    flex: none;
    border-top: 1px solid #ddd;
    background-color: #eee;
}

/* dialog */
.dialog {
    position: absolute;
    left: 151px;
    top: 155px;
    width: 433px;
    height: 372px;
    background-color: #f0f0f0;
    border: 1px solid #7f9db9;
    box-shadow: 0 1px 6px rgba(0, 0, 0, 0.2);
    font-size: 10.6px;
    color: #444;
    filter: blur(0.3px);
}

.dlg-title {
    height: 26px;
    background-color: white;
    display: flex;
    align-items: center;
    justify-content: space-between;
    padding: 0 11px 2px 3px;
    font-size: 11.3px;
    color: #444;
}

.tabs {
    height: 27px;
    display: flex;
    align-items: flex-end;
    padding-left: 9px;
    font-size: 10.4px;
}

.tab {
    height: 21px;
    width: 34px;
    line-height: 22px;
    text-align: center;
}

.tab-active {
    margin-left: 5px;
    width: 40px;
    height: 24px;
    line-height: 26px;
    background-color: #f4f4f4;
}

.tab-frame {
    margin-left: 6px;
    width: 40px;
    height: 20px;
    margin-bottom: 1px;
    line-height: 22px;
    border-left: 2px solid #aaa;
    border-right: 2px solid #aaa;
}

.panel {
    margin-left: 6px;
    width: 420px;
    height: 281px;
    border-right: 2px solid #8a8a8a;
    border-bottom: 2px solid #8a8a8a;
    padding: 4px 0 0 11px;
    position: relative;
}

.panel-top {
    height: 42px;
    display: flex;
    align-items: flex-start;
}

.lbl {
    height: 17px;
    line-height: 14px;
}

.axis-col {
    width: 210px;
}

.axis-combo {
    height: 20px;
    display: flex;
    align-items: center;
    border-top: 1px solid #888;
    border-left: 2px solid #888;
    border-right: 1px solid #aaa;
    border-bottom: 1px solid #f8f8f8;
    padding: 1px 0 1px;
    background-color: white;
}

.axis-sel {
    flex: 1;
    height: 15px;
    background-color: #0078d7;
    color: white;
    line-height: 15px;
    padding-left: 1px;
}

.push-btn {
    width: 66px;
    height: 21px;
    display: flex;
    align-items: center;
    justify-content: center;
    border-right: 2px solid #9a9a9a;
    border-bottom: 2px solid #9a9a9a;
    border-top: 1px solid #e8e8e8;
    border-left: 1px solid #e8e8e8;
    color: #444;
}

.rename {
    margin: 16px 0 0 10px;
    width: 76px;
}

.apply-col {
    margin-left: 7px;
    width: 94px;
}

.apply-col .lbl {
    padding-left: 3px;
}

.apply-combo {
    height: 24px;
    display: flex;
    align-items: flex-start;
    padding: 2px 0 0 1px;
    border-top: 1px solid #888;
    border-left: 2px solid #888;
    border-right: 2px solid #aaa;
    border-bottom: 2px solid #aaa;
    color: #c8c8c8;
    white-space: nowrap;
    overflow: hidden;
}

.apply-combo span:first-of-type {
    width: 60px;
    overflow: hidden;
    line-height: 14px;
    font-size: 10px;
}

.apply-combo .drop {
    margin-top: 2px;
    margin-left: 2px;
}

.panel-body {
    display: flex;
    align-items: flex-start;
}

.settings-col {
    width: 72px;
    margin-left: -1px;
}

.list {
    margin-left: 2px;
    width: 70px;
    height: 208px;
    display: flex;
    background-color: #f6f6f6;
    border-left: 1px solid #aaa;
    border-top: 1px solid #aaa;
    overflow: hidden;
}

.list-items {
    width: 51px;
    padding-top: 3px;
    flex: none;
}

.list-item {
    height: 47.7px;
    display: flex;
    flex-direction: column;
    align-items: center;
    gap: 2px;
    white-space: nowrap;
}

.list-item svg {
    flex: none;
    margin-left: -2px;
}

.list-item span {
    margin-top: 3px;
}

.list-scroll {
    width: 18px;
    flex: none;
    background-color: #f0f0f0;
    display: flex;
    flex-direction: column;
    align-items: center;
    padding: 7px 0 5px;
    position: relative;
}

.list-thumb {
    position: absolute;
    top: 17px;
    left: 1px;
    width: 15px;
    height: 115px;
    background-color: #c8c8c8;
}

.arrow-light {
    width: 6px;
    height: 6px;
    border-width: 1.5px;
}

.group {
    margin-top: 14px;
    width: 157px;
    height: 119px;
    border: 1px solid #b8b8b8;
    position: relative;
    flex: none;
}

.group-axes {
    margin-left: 8px;
    padding: 12px 0 0 9px;
}

.group-line {
    margin-left: 5px;
    padding: 9px 0 0 7px;
}

.legend {
    position: absolute;
    left: 5px;
    top: -7px;
    padding: 0 2px;
    background-color: #f0f0f0;
    line-height: 14px;
}

.check-row {
    height: 14px;
    display: flex;
    align-items: center;
    gap: 5px;
}

.check-row2 {
    margin-top: 13px;
}

.check {
    width: 11px;
    height: 11px;
    background-color: white;
    border-top: 1px solid #888;
    border-left: 1px solid #888;
    font-size: 9px;
    font-weight: bold;
    line-height: 9px;
    text-align: center;
    color: #111;
}

.field-row {
    height: 18px;
    margin-top: 10px;
    display: flex;
    align-items: flex-start;
}

.field-row2 {
    margin-top: 6px;
}

.field {
    width: 52px;
    height: 18px;
    flex: none;
    background-color: #f8f8f8;
    border-top: 1px solid #aaa;
    border-left: 1px solid #aaa;
    padding-left: 3px;
    line-height: 16px;
}

.slider {
    flex: none;
    margin-left: 10px;
    overflow: visible;
}

.color-lbl {
    height: 16px;
}

.color-select {
    width: 135px;
    height: 19px;
    display: flex;
    align-items: center;
    background-color: white;
    border-top: 1px solid #888;
    border-left: 1px solid #888;
    border-bottom: 1px solid #aaa;
    border-right: 1px solid #aaa;
    padding-left: 4px;
}

.color-select span:nth-child(2) {
    flex: 1;
    margin-left: 2px;
}

.swatch {
    width: 14px;
    height: 11px;
    background-color: black;
    flex: none;
}

.thick-lbl {
    margin-top: 10px;
    padding-left: 1px;
}

.thick-row {
    margin-top: 1px;
    padding-left: 1px;
}

.field-thick {
    width: 53px;
    height: 19px;
    background-color: #fafafa;
}

.slider-thick {
    margin-left: 12px;
}

.dlg-footer {
    display: flex;
    justify-content: flex-end;
    gap: 20px;
    padding: 7px 6px 0 0;
}

.btn-default {
    border: 2px solid #666;
    border-top-width: 1px;
    border-left-width: 1px;
}

.btn-disabled {
    color: #b5b5b5;
}

.dlg-close {
    display: block;
}

/* recorder overlays */
.highlight {
    position: absolute;
    left: 278px;
    top: 294px;
    pointer-events: none;
}

.watermark {
    position: absolute;
    left: 12px;
    top: 658px;
    color: #f4f4f4;
    text-shadow: 0 0 1px #222, 1px 1px 1px #333, -1px 0 1px #333;
    font-family: 'Liberation Sans', sans-serif;
    font-weight: bold;
}

.wm-small {
    font-size: 7.3px;
}

.wm-big {
    margin-top: 4px;
    display: flex;
    align-items: center;
    font-size: 11px;
    letter-spacing: 0.2px;
}

.wm-dot {
    width: 23px;
    height: 23px;
    margin: -4px 4px -4px 3px;
    border-radius: 50%;
    border: 3px solid #4f86b8;
    background: radial-gradient(circle, #1f80d8 5px, rgba(240, 240, 240, 0.6) 6px);
}
```
